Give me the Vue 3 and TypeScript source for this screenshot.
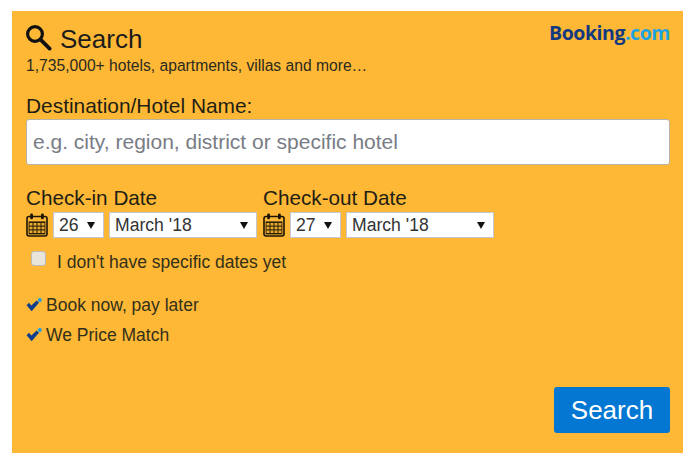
<script setup lang="ts">
const dates = [
  { label: 'Check-in Date', day: '26' },
  { label: 'Check-out Date', day: '27' },
];
const perks = ['Book now, pay later', 'We Price Match'];
</script>

<template>
  <div class="page">
    <form class="panel" @submit.prevent>
      <header class="head">
        <div>
          <h1 class="title">
            <svg class="mag" width="26" height="26" viewBox="0 0 26 26" aria-hidden="true">
              <circle cx="9" cy="9" r="7.4" fill="none" stroke="#111" stroke-width="3.2" />
              <path d="M14.6 14.6 L23.6 23.6" stroke="#111" stroke-width="3.8" stroke-linecap="round" />
            </svg>
            Search
          </h1>
          <p class="sub">1,735,000+ hotels, apartments, villas and more…</p>
        </div>
        <div class="logo"><span class="b">Booking</span><span class="c">.com</span></div>
      </header>

      <label class="dest-label" for="dest">Destination/Hotel Name:</label>
      <input id="dest" class="dest" placeholder="e.g. city, region, district or specific hotel" />

      <div class="dates">
        <div v-for="d in dates" :key="d.label" class="date">
          <div class="date-label">{{ d.label }}</div>
          <div class="date-row">
            <svg class="cal" width="22" height="24" viewBox="0 0 22 24" aria-hidden="true">
              <rect x="1" y="3.5" width="20" height="19.5" rx="2" fill="#feb836" stroke="#1c1505" stroke-width="1.6" />
              <rect x="2.6" y="8.4" width="16.8" height="13" fill="#2a2008" />
              <g fill="#e8a92f">
                <rect x="3.5" y="10" width="3" height="2.6" /><rect x="7.5" y="10" width="3" height="2.6" /><rect x="11.5" y="10" width="3" height="2.6" /><rect x="15.5" y="10" width="3" height="2.6" />
                <rect x="3.5" y="13.7" width="3" height="2.6" /><rect x="7.5" y="13.7" width="3" height="2.6" /><rect x="11.5" y="13.7" width="3" height="2.6" /><rect x="15.5" y="13.7" width="3" height="2.6" />
                <rect x="3.5" y="17.4" width="3" height="2.6" /><rect x="7.5" y="17.4" width="3" height="2.6" /><rect x="11.5" y="17.4" width="3" height="2.6" /><rect x="15.5" y="17.4" width="3" height="2.6" />
              </g>
              <rect x="4.2" y="0.6" width="2.8" height="5.6" rx="1.3" fill="#1c1505" />
              <rect x="15" y="0.6" width="2.8" height="5.6" rx="1.3" fill="#1c1505" />
            </svg>
            <div class="sel day">
              <select><option>{{ d.day }}</option></select>
            </div>
            <div class="sel month">
              <select><option>March '18</option></select>
            </div>
          </div>
        </div>
      </div>

      <label class="nodates">
        <input type="checkbox" class="box" />
        <span>I don't have specific dates yet</span>
      </label>

      <ul class="perks">
        <li v-for="p in perks" :key="p">
          <svg width="17" height="14" viewBox="0 0 17 14" aria-hidden="true">
            <path d="M0.6 7.2 L3 4.8 L5.4 7.4 L10.6 2.6 L13 4.8 L5.6 13.2 Z" fill="#123f8c" />
            <circle cx="13.8" cy="2" r="2" fill="#1f9fe8" />
          </svg>
          <span>{{ p }}</span>
        </li>
      </ul>

      <div class="actions">
        <button type="submit" class="go">Search</button>
      </div>
    </form>
  </div>
</template>

<style>
html, body { margin: 0; background: #fff; }
</style>

<style scoped>
.page {
  width: 700px;
  height: 464px;
  padding: 11px 17px 11px 12px;
  box-sizing: border-box;
  font-family: "Liberation Sans", Arial, sans-serif;
  color: #222;
}
.panel {
  height: 442px;
  box-sizing: border-box;
  background: #feb836;
  padding: 12px 13px 20px 14px;
  display: flex;
  flex-direction: column;
}
.head { display: flex; justify-content: space-between; align-items: flex-start; }
.title {
  margin: 0;
  display: flex;
  align-items: center;
  gap: 8px;
  font-size: 26px;
  font-weight: 400;
  line-height: 33px;
  color: #1c1c1c;
}
.mag { margin-top: -3px; }
.sub { margin: 1px 0 0; font-size: 15.65px; line-height: 18px; color: #2a2a20; }
.logo { font-size: 19.5px; font-weight: 700; letter-spacing: -0.45px; line-height: 24px; margin-top: -2px; font-family: "Open Sans", sans-serif; }
.b { color: #133a80; }
.c { color: #1fa3e0; font-weight: 700; }
.dest-label { margin-top: 19px; font-size: 20.9px; line-height: 24px; color: #1e1e14; }
.dest {
  margin-top: 1px;
  height: 46px;
  box-sizing: border-box;
  width: 100%;
  border: 1px solid #b9b4a8;
  border-radius: 3px;
  padding: 0 6px;
  font: 21px "Liberation Sans", Arial, sans-serif;
  background: #fff;
}
.dest::placeholder { color: #787c85; opacity: 1; }
.dates { display: flex; gap: 6px; margin-top: 21px; }
.date-label { font-size: 20.7px; line-height: 24px; color: #1e1e14; }
.date-row { display: flex; align-items: center; gap: 4px; margin-top: 2px; }
.cal { margin-right: 1px; }
.sel { position: relative; height: 26px; }
.sel select {
  appearance: none;
  width: 100%;
  height: 100%;
  box-sizing: border-box;
  border: 1px solid #c3c6d0;
  background: #fff;
  padding: 0 0 0 5px;
  font: 17.6px "Liberation Sans", Arial, sans-serif;
  color: #333;
  border-radius: 0;
}
.sel::after {
  content: "";
  position: absolute;
  right: 9px;
  top: 10px;
  border-left: 4px solid transparent;
  border-right: 4px solid transparent;
  border-top: 7px solid #111;
  pointer-events: none;
}
.day { width: 51px; }
.month { width: 148px; margin-left: 1px; }
.nodates { display: flex; align-items: center; gap: 11px; margin: 12px 0 0 5px; font-size: 17.5px; line-height: 24px; color: #33301a; }
.box {
  appearance: none;
  margin: -7px 0 0;
  width: 15px;
  height: 15px;
  border: 1px solid #bbb;
  border-radius: 3px;
  background: #e9e5da;
}
.perks { list-style: none; margin: 19px 0 0; padding: 0; display: flex; flex-direction: column; gap: 6px; }
.perks li { display: flex; align-items: center; gap: 3px; font-size: 17.5px; line-height: 24px; color: #33301a; }
.actions { margin-top: auto; display: flex; justify-content: flex-end; }
.go {
  width: 116px;
  height: 46px;
  background: #0377d2;
  border: 0;
  border-radius: 3px;
  color: #fff;
  font: 26px "Liberation Sans", Arial, sans-serif;
}
</style>
